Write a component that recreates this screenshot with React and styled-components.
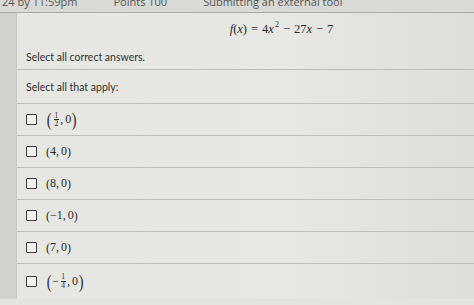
import React from "react";
import styled, { createGlobalStyle } from "styled-components";

const Global = createGlobalStyle`
  html, body { margin: 0; padding: 0; }
  body { background: #e3e3df; width: 474px; height: 305px; overflow: hidden; }
  #root { width: 474px; height: 305px; }
`;

const Page = styled.div`
  width: 474px;
  height: 305px;
  display: flex;
  flex-direction: column;
  background: #e3e3df;
  font-family: "Lato", "Liberation Sans", sans-serif;
  overflow: hidden;
`;

const TopBar = styled.div`
  height: 12px;
  background: #d9d9d5;
  border-bottom: 1px solid #a9a9a5;
  display: flex;
  gap: 36px;
  padding-left: 2px;
  overflow: hidden;
  color: #555;
  font-family: "Open Sans", "Liberation Sans", sans-serif;
  font-size: 11px;
  line-height: 11px;
`;

const TopItem = styled.span`
  margin-top: -4px;
  white-space: nowrap;
`;

const Body = styled.div`
  display: flex;
  height: 286px;
`;

const Gutter = styled.div`
  width: 16px;
  background: #d1d1cd;
  border-right: 1px solid #c8c8c4;
`;

const Main = styled.div`
  flex: 1;
  display: flex;
  flex-direction: column;
  background: linear-gradient(90deg, #e6e6e2 0%, #e7e7e3 60%, #deddda 100%);
`;

const Equation = styled.div`
  height: 32px;
  display: flex;
  align-items: center;
  justify-content: center;
  padding-left: 72px;
  font-family: "Liberation Serif", "DejaVu Serif", serif;
  font-size: 12.5px;
  color: #2a2a2a;
`;

const I = styled.i`
  font-style: italic;
`;

const Sup = styled.span`
  font-size: 8px;
  position: relative;
  top: -5px;
  margin-left: 1px;
`;

const Op = styled.span`
  margin: 0 4px;
`;

const Row = styled.div`
  height: ${(p) => p.$h}px;
  display: flex;
  align-items: center;
  padding-left: 9px;
  box-sizing: border-box;
  border-bottom: ${(p) => (p.$line ? "1px solid #bdbdb9" : "none")};
  gap: 9px;
`;

const Label = styled.span`
  font-size: 10.5px;
  color: #333;
`;

const Box = styled.span`
  width: 9px;
  height: 9px;
  border: 1.5px solid #3d3d3d;
  border-radius: 1px;
  background: #f2f2ef;
  flex: none;
`;

const MathText = styled.span`
  font-family: "Liberation Serif", "DejaVu Serif", serif;
  font-size: 12px;
  color: #2c2c2c;
  display: inline-flex;
  align-items: center;
`;

const Comma = styled.span`
  margin-right: 2px;
`;

const Paren = styled.span`
  font-size: ${(p) => (p.$big ? 19 : 12)}px;
  line-height: 1;
  transform: ${(p) => (p.$big ? "scaleX(0.75)" : "none")};
`;

const Frac = styled.span`
  display: inline-flex;
  flex-direction: column;
  align-items: center;
  font-size: 7.5px;
  line-height: 7px;
  margin: 0 1.5px;
`;

const Bar = styled.span`
  width: 5px;
  height: 0.8px;
  background: #333;
  margin: 0.5px 0;
`;

const Fraction = ({ n, d }) => (
  <Frac>
    <span>{n}</span>
    <Bar />
    <span>{d}</span>
  </Frac>
);

const options = [
  { big: true, first: <Fraction n="1" d="2" /> },
  { first: "4" },
  { first: "8" },
  { first: "−1" },
  { first: "7" },
  { big: true, first: <>−<Fraction n="1" d="4" /></> },
];

export default function App() {
  return (
    <Page>
      <Global />
      <TopBar>
        <TopItem>24 by 11:59pm</TopItem>
        <TopItem>Points 100</TopItem>
        <TopItem>Submitting an external tool</TopItem>
      </TopBar>
      <Body>
        <Gutter />
        <Main>
          <Equation>
            <I>f</I>(<I>x</I>)<Op>=</Op>4<I>x</I>
            <Sup>2</Sup>
            <Op>−</Op>27<I>x</I>
            <Op>−</Op>7
          </Equation>
          <Row $h={25} $line>
            <Label>Select all correct answers.</Label>
          </Row>
          <Row $h={34} $line>
            <Label>Select all that apply:</Label>
          </Row>
          {options.map((o, i) => (
            <Row key={i} $h={i === options.length - 1 ? 34 : 32} $line={i !== options.length - 1}>
              <Box />
              <MathText>
                <Paren $big={o.big}>(</Paren>
                {o.first}
                <Comma>,</Comma>0
                <Paren $big={o.big}>)</Paren>
              </MathText>
            </Row>
          ))}
        </Main>
      </Body>
    </Page>
  );
}
